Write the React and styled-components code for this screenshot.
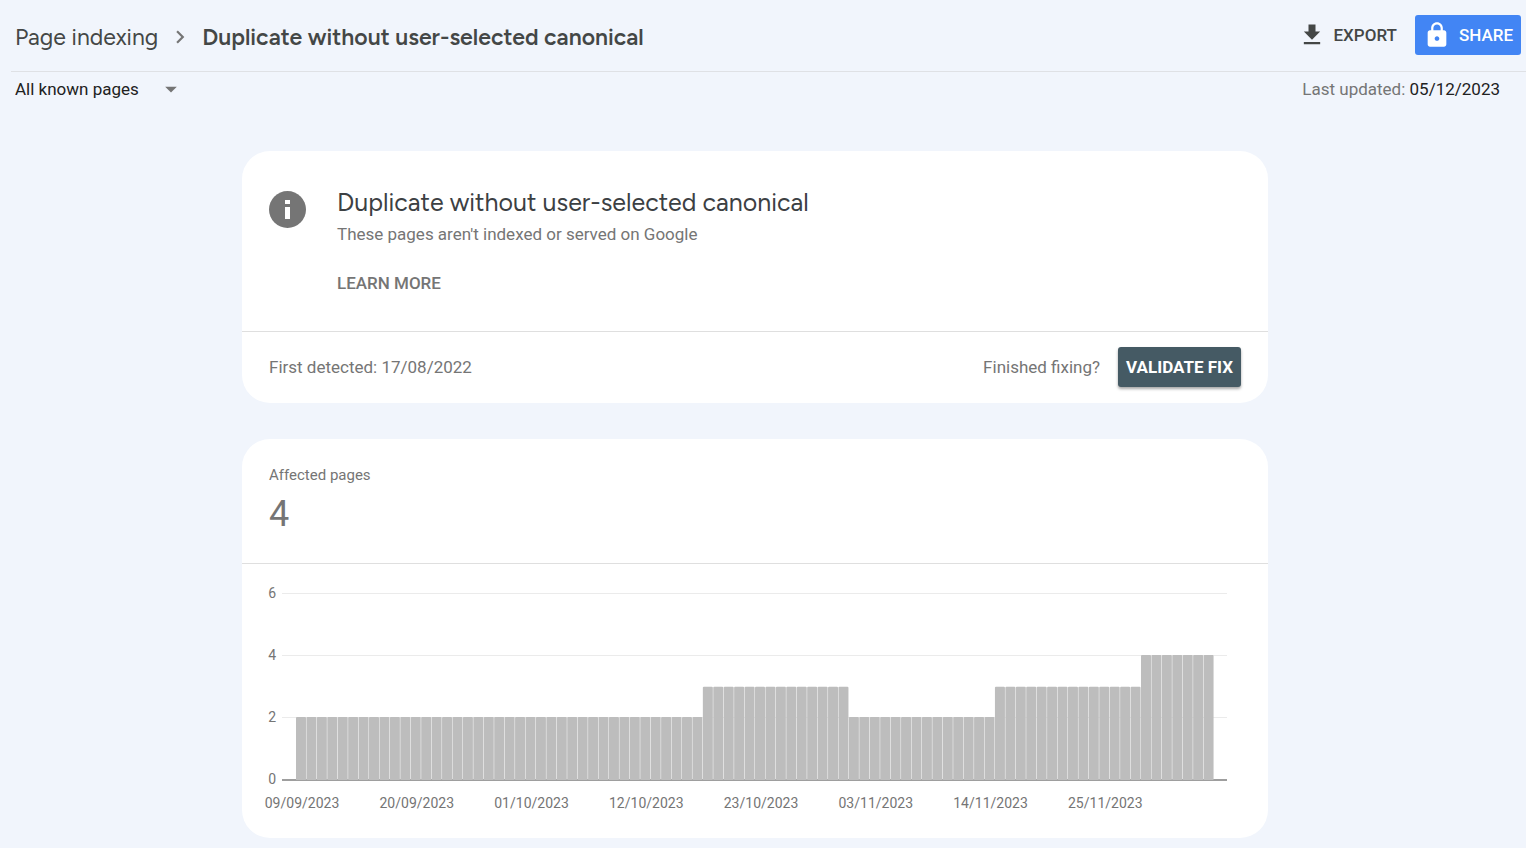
import React from 'react'
import styled, { createGlobalStyle } from 'styled-components'
import {
  MdArrowDropDown,
  MdChevronRight,
  MdFileDownload,
  MdLock,
} from 'react-icons/md'

const GlobalStyle = createGlobalStyle`
  * {
    box-sizing: border-box;
  }

  body {
    margin: 0;
    background: #f1f5fc;
    color: #757575;
    font-family: Roboto, 'Liberation Sans', sans-serif;
    font-size: 17px;
    line-height: 24px;
  }
`

const displayFont = "Figtree, Lato, 'Open Sans', sans-serif"

const Header = styled.header`
  display: flex;
  justify-content: space-between;
  align-items: center;
  margin-left: 11px;
  padding: 15px 5px 16px 4px;
  border-bottom: 1px solid #dfe1e5;
`

const Breadcrumb = styled.nav`
  display: flex;
  align-items: center;
  gap: 9px;
  padding-top: 4px;
  color: #444746;
  font-family: ${displayFont};
  font-size: 23px;
  line-height: 32px;
`

const BreadcrumbLink = styled.a`
  color: inherit;
  text-decoration: none;
`

const PageTitle = styled.h1`
  margin: 0;
  font-size: inherit;
  font-weight: 600;
`

const Actions = styled.div`
  display: flex;
  gap: 10px;
`

const Button = styled.button`
  display: flex;
  align-items: center;
  gap: 8px;
  height: 40px;
  padding: 0 8px;
  border: 0;
  border-radius: 3px;
  background: ${props => props.$background || 'transparent'};
  box-shadow: ${props =>
    props.$raised ? '0 2px 3px rgba(0, 0, 0, 0.35)' : 'none'};
  color: ${props => props.$color || '#fff'};
  font-family: inherit;
  font-size: 17px;
  font-weight: ${props => props.$weight || 500};
  text-transform: uppercase;
  white-space: nowrap;
`

const Toolbar = styled.div`
  display: flex;
  justify-content: space-between;
  align-items: center;
  padding: 1px 26px 0 15px;
`

const SelectWrapper = styled.div`
  display: flex;
  position: relative;
`

const Select = styled.select`
  width: 170px;
  height: 32px;
  padding: 0;
  border: 0;
  appearance: none;
  background: transparent;
  color: #212121;
  font: inherit;
`

const SelectArrow = styled(MdArrowDropDown)`
  position: absolute;
  top: 2px;
  right: 0;
  pointer-events: none;
`

const Updated = styled.div`
  time {
    color: #212121;
  }
`

const Main = styled.main`
  display: flex;
  flex-direction: column;
  gap: 36px;
  max-width: 1058px;
  margin: 0 auto;
  padding: 46px 32px 10px 0;
`

const Content = styled.div`
  padding-left: 16px;
`

const Card = styled.section`
  overflow: hidden;
  border-radius: 28px;
  background: #fff;
`

const Issue = styled.div`
  display: flex;
  gap: 31px;
  padding: 35px 27px 36px;
  border-bottom: 1px solid #dfdfdf;
`

const InfoIcon = styled.svg`
  flex: none;
  width: 37px;
  height: 37px;
  margin-top: 5px;
`

const IssueText = styled.div`
  flex: 1;
`

const IssueTitle = styled.h2`
  margin: 0;
  color: #3c4043;
  font-family: ${displayFont};
  font-size: 25px;
  font-weight: 400;
  line-height: 32px;
`

const Description = styled.p`
  margin: 4px 0 25px;
`

const LearnMore = styled.a`
  display: block;
  color: inherit;
  font-weight: 500;
  text-decoration: none;
  text-transform: uppercase;
`

const CardFooter = styled.div`
  display: flex;
  justify-content: space-between;
  align-items: center;
  padding: 15px 27px 16px;
`

const Validate = styled.div`
  display: flex;
  align-items: center;
  gap: 18px;
`

const Summary = styled.div`
  padding: 24px 27px 27px;
  border-bottom: 1px solid #dfdfdf;
`

const SummaryLabel = styled.h2`
  margin: 0;
  font-size: 15px;
  font-weight: 400;
  line-height: 24px;
`

const SummaryValue = styled.div`
  padding-top: 5px;
  font-size: 36px;
  line-height: 44px;
`

const ChartSvg = styled.svg`
  display: block;
  width: 100%;

  text {
    fill: #757575;
    font-size: 14px;
  }
`

const chart = {
  left: 40,
  right: 985,
  barStart: 54,
  barStep: 10.432,
  zero: 216,
  unit: 31,
}

// [days in a row, affected pages]
const periods = [[39, 2], [14, 3], [14, 2], [14, 3], [7, 4]]
const days = periods.flatMap(([count, pages]) => Array(count).fill(pages))

const dates = [
  '09/09/2023',
  '20/09/2023',
  '01/10/2023',
  '12/10/2023',
  '23/10/2023',
  '03/11/2023',
  '14/11/2023',
  '25/11/2023',
]

const barPath = (pages, index) => {
  const x = chart.barStart + index * chart.barStep
  const y = chart.zero - pages * chart.unit - (pages % 2 ? 0.3 : 1)
  const width = chart.barStep - 0.45
  return `M${x} ${chart.zero}V${y + 1}q0 -1 1 -1h${width - 2}q1 0 1 1V${
    chart.zero
  }z`
}

const Chart = () => (
  <ChartSvg viewBox="0 0 1026 274" role="img" aria-label="Affected pages by day">
    {[2, 4, 6].map(value => (
      <rect
        key={value}
        x={chart.left}
        y={chart.zero - value * chart.unit - 1}
        width={chart.right - chart.left}
        height="1"
        fill="#ebebeb"
      />
    ))}
    <rect
      x={chart.left}
      y={chart.zero - 1}
      width={chart.right - chart.left}
      height="2"
      fill="#9e9e9e"
    />
    {days.map((pages, index) => (
      <path key={index} d={barPath(pages, index)} fill="#bdbdbd" />
    ))}
    {[0, 2, 4, 6].map(value => (
      <text
        key={value}
        x="34"
        y={chart.zero - value * chart.unit + 4}
        textAnchor="end"
      >
        {value}
      </text>
    ))}
    {dates.map((date, index) => (
      <text
        key={date}
        x={chart.barStart + 6 + index * 11 * chart.barStep}
        y="244"
        textAnchor="middle"
      >
        {date}
      </text>
    ))}
  </ChartSvg>
)

const App = () => (
  <>
    <GlobalStyle />
    <Header>
      <Breadcrumb aria-label="Breadcrumb">
        <BreadcrumbLink href="#indexing">Page indexing</BreadcrumbLink>
        <MdChevronRight size={26} color="#757575" />
        <PageTitle>Duplicate without user-selected canonical</PageTitle>
      </Breadcrumb>
      <Actions>
        <Button type="button" $color="#444746">
          <MdFileDownload size={28} />
          Export
        </Button>
        <Button type="button" $background="#4285f4">
          <MdLock size={28} />
          Share
        </Button>
      </Actions>
    </Header>
    <Toolbar>
      <SelectWrapper>
        <Select aria-label="Pages shown" defaultValue="all">
          <option value="all">All known pages</option>
        </Select>
        <SelectArrow size={28} />
      </SelectWrapper>
      <Updated>
        Last updated: <time dateTime="2023-12-05">05/12/2023</time>
      </Updated>
    </Toolbar>
    <Content>
      <Main>
        <Card>
          <Issue>
            <InfoIcon viewBox="0 0 37 37" aria-hidden="true">
              <circle cx="18.5" cy="18.5" r="18.5" fill="#757575" />
              <path d="M16 9h5v4h-5zM16 16h5v12h-5z" fill="#fff" />
            </InfoIcon>
            <IssueText>
              <IssueTitle>Duplicate without user-selected canonical</IssueTitle>
              <Description>
                These pages aren't indexed or served on Google
              </Description>
              <LearnMore href="#learn-more">Learn more</LearnMore>
            </IssueText>
          </Issue>
          <CardFooter>
            <span>First detected: 17/08/2022</span>
            <Validate>
              <span>Finished fixing?</span>
              <Button type="button" $background="#455a64" $weight={700} $raised>
                Validate fix
              </Button>
            </Validate>
          </CardFooter>
        </Card>
        <Card>
          <Summary>
            <SummaryLabel>Affected pages</SummaryLabel>
            <SummaryValue>4</SummaryValue>
          </Summary>
          <Chart />
        </Card>
      </Main>
    </Content>
  </>
)

export default App
